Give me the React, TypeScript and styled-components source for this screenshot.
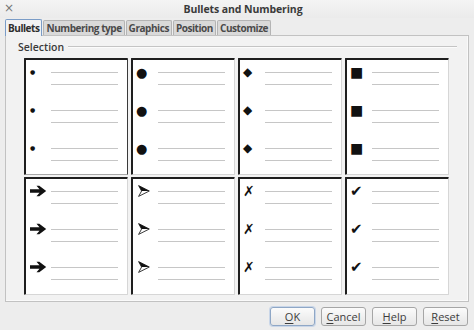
import type { ReactNode } from "react";
import styled, { createGlobalStyle } from "styled-components";

const GlobalStyle = createGlobalStyle`
  html, body {
    margin: 0;
    padding: 0;
    background: #ededed;
  }
  body {
    font-family: "Open Sans", "DejaVu Sans", sans-serif;
    color: #3c3c3c;
  }
`;

const HeavyArrow = () => (
  <svg width="17" height="12" viewBox="0 0 17 12">
    <path d="M0 4.3 H9.5 L6.5 0.8 L9.3 0.8 L16.2 6 L9.3 11.2 L6.5 11.2 L9.5 7.7 H0 Z" fill="#111" />
  </svg>
);

const Arrowhead = () => (
  <svg width="12" height="12" viewBox="0 0 12 12">
    <path d="M0.6 0.6 L11.3 6 L0.6 11.4 L3.6 6 Z" fill="#fff" stroke="#222" strokeWidth="0.9" strokeLinejoin="round" />
    <path d="M0.6 0.6 L11.3 6 L3.6 6 Z" fill="#111" />
  </svg>
);

type Bullet = { glyph: ReactNode; size: number; dx?: number; bold?: boolean };

const BULLETS: Bullet[] = [
  { glyph: "●", size: 6, dx: 0 },
  { glyph: "●", size: 13, dx: -1 },
  { glyph: "◆", size: 12, dx: -1 },
  { glyph: "■", size: 14, dx: -1 },
  { glyph: <HeavyArrow />, size: 12, dx: 0 },
  { glyph: <Arrowhead />, size: 12, dx: 1 },
  { glyph: "✗", size: 14, dx: -1, bold: true },
  { glyph: "✔", size: 15, dx: -1 },
];

const TABS = ["Bullets", "Numbering type", "Graphics", "Position", "Customize"];

const App = () => {
  return (
    <>
      <GlobalStyle />
      <Window>
        <TitleBar>
          <CloseX>×</CloseX>
          <Title>Bullets and Numbering</Title>
        </TitleBar>

        <TabRow>
          {TABS.map((t, i) => (
            <Tab key={t} active={i === 0}>
              {t}
            </Tab>
          ))}
        </TabRow>

        <Panel>
          <SectionHead>
            <span>Selection</span>
            <Rule />
          </SectionHead>

          <Grid>
            {BULLETS.map((b, i) => (
              <Cell key={i} selected={i === 0}>
                {[0, 1, 2].map((r) => (
                  <Item key={r}>
                    <Mark
                      size={b.size}
                      bold={b.bold}
                      style={{ left: 4 + (b.dx || 0) }}
                    >
                      {b.glyph}
                    </Mark>
                    <Lines>
                      <Line />
                      <Line />
                    </Lines>
                  </Item>
                ))}
              </Cell>
            ))}
          </Grid>
        </Panel>

        <ButtonRow>
          <Button focused>
            <u>O</u>K
          </Button>
          <Button>
            <u>C</u>ancel
          </Button>
          <Button>
            <u>H</u>elp
          </Button>
          <Button>
            <u>R</u>eset
          </Button>
        </ButtonRow>
      </Window>
    </>
  );
};

export default App;

const Window = styled.div`
  width: 474px;
  height: 330px;
  background: #ededed;
  display: flex;
  flex-direction: column;
  overflow: hidden;
`;

const TitleBar = styled.div`
  height: 18px;
  display: flex;
  align-items: center;
  position: relative;
  background: linear-gradient(#f4f4f4, #ebebeb);
`;

const CloseX = styled.span`
  position: absolute;
  left: 4px;
  top: 1px;
  font-family: "DejaVu Sans", sans-serif;
  font-size: 12px;
  color: #777;
`;

const Title = styled.div`
  flex: 1;
  text-align: center;
  padding-left: 12px;
  font-size: 10.5px;
  font-weight: 700;
  letter-spacing: -0.1px;
  color: #3a3a3a;
`;

const TabRow = styled.div`
  display: flex;
  align-items: flex-end;
  gap: 1px;
  padding-left: 5px;
  height: 17px;
`;

const Tab = styled.div<{ active?: boolean }>`
  height: ${(p) => (p.active ? "17px" : "15px")};
  box-sizing: border-box;
  padding: 0 2px;
  display: flex;
  align-items: center;
  font-size: 10px;
  font-weight: 700;
  letter-spacing: -0.45px;
  color: ${(p) => (p.active ? "#2d2d2d" : "#4a4a4a")};
  background: ${(p) => (p.active ? "#f2f2f2" : "#d9d9d9")};
  border: 1px solid ${(p) => (p.active ? "#7a9cc7" : "#b4b4b4")};
  border-bottom: none;
  border-radius: 2px 2px 0 0;
  margin-bottom: ${(p) => (p.active ? "-1px" : "0")};
  position: relative;
  z-index: ${(p) => (p.active ? 1 : 0)};
`;

const Panel = styled.div`
  margin: 0 5px 0 5px;
  height: 267px;
  box-sizing: border-box;
  background: #f2f2f2;
  border: 1px solid #c2c2c2;
  box-shadow: inset -1px -1px 0 #fafafa;
  padding: 3px 20px 0 18px;
`;

const SectionHead = styled.div`
  display: flex;
  align-items: center;
  gap: 4px;
  height: 16px;
  font-size: 10.5px;
  font-weight: 600;
  color: #3a3a3a;
  margin-left: -6px;
  margin-right: -9px;
`;

const Rule = styled.div`
  flex: 1;
  height: 1px;
  background: #c4c4c4;
  border-bottom: 1px solid #fbfbfb;
`;

const Grid = styled.div`
  margin-top: 3px;
  display: grid;
  grid-template-columns: repeat(4, 104px);
  grid-template-rows: 117px 118px;
  column-gap: 3px;
  row-gap: 2px;
`;

const Cell = styled.div<{ selected?: boolean }>`
  background: #fff;
  box-sizing: border-box;
  border-top: 2px solid #1e1e1e;
  border-left: 2px solid #1e1e1e;
  border-right: 1px solid ${(p) => (p.selected ? "#3a3a3a" : "#d6d6d6")};
  border-bottom: 1px solid ${(p) => (p.selected ? "#a8a8a8" : "#d6d6d6")};
  border-radius: 1px;
  padding-top: 5px;
  display: flex;
  flex-direction: column;
  gap: 14px;
`;

const Item = styled.div`
  position: relative;
  height: 24px;
  display: flex;
`;

const Mark = styled.span<{ size: number; bold?: boolean }>`
  position: absolute;
  top: 0;
  height: 14px;
  display: flex;
  align-items: center;
  font-family: "DejaVu Sans", sans-serif;
  font-size: ${(p) => p.size}px;
  font-weight: ${(p) => (p.bold ? 700 : 400)};
  line-height: 1;
  color: #111;
`;

const Lines = styled.div`
  margin-left: 25px;
  width: 67px;
  padding-top: 7px;
  display: flex;
  flex-direction: column;
  gap: 11px;
`;

const Line = styled.div`
  height: 1px;
  background: #c6c6c6;
`;

const ButtonRow = styled.div`
  display: flex;
  justify-content: flex-end;
  gap: 6px;
  padding: 5px 6px 0 0;
`;

const Button = styled.button<{ focused?: boolean }>`
  width: 45px;
  height: 19px;
  box-sizing: border-box;
  padding: 0;
  font-family: "Open Sans", "DejaVu Sans", sans-serif;
  font-size: 11px;
  color: #3c3c3c;
  background: linear-gradient(#fbfbfb, #e6e6e6);
  border: 1px solid ${(p) => (p.focused ? "#8fa7c6" : "#a6a6a6")};
  border-radius: 3px;
  box-shadow: ${(p) => (p.focused ? "0 0 0 1px #c9d6e8" : "none")};

  u {
    text-decoration: underline;
    text-underline-offset: 2px;
  }
`;
